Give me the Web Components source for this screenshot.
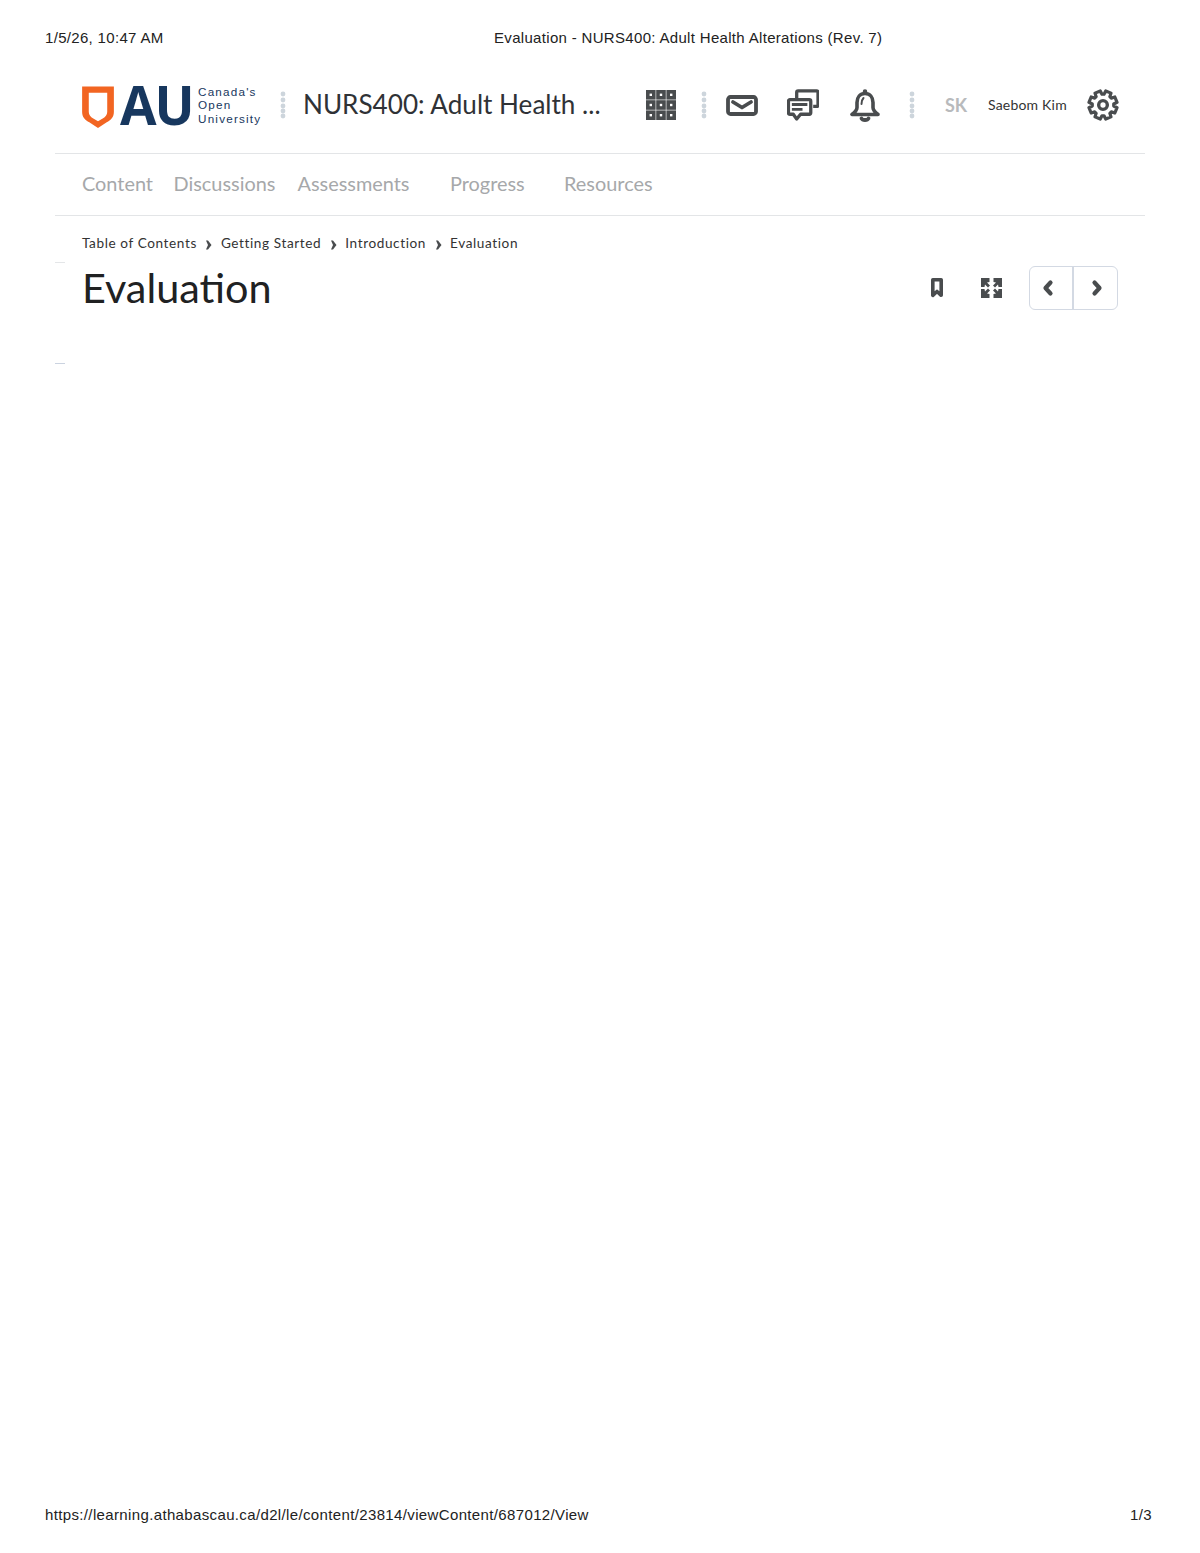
<!DOCTYPE html>
<html>
<head>
<meta charset="utf-8">
<title>Evaluation - NURS400: Adult Health Alterations (Rev. 7)</title>
<style>
    html, body { margin: 0; padding: 0; background: #fff; }
</style>
</head>
<body>
<print-page>
    <au-navbar></au-navbar>
    <au-tabs></au-tabs>
    <au-heading></au-heading>
</print-page>

<script>
// outline of a gear, 8 teeth, for the settings icon
function gearPath(cx, cy, outer, inner) {
    let d = '';
    for (let i = 0; i < 8; i++) {
        const a = i * Math.PI / 4 + Math.PI / 8;
        const corners = [[inner, -0.30], [outer, -0.20], [outer, 0.20], [inner, 0.30]];
        corners.forEach(([r, o]) => {
            const x = cx + r * Math.cos(a + o);
            const y = cy + r * Math.sin(a + o);
            d += (d ? 'L' : 'M') + x.toFixed(1) + ' ' + y.toFixed(1);
        });
    }
    return d + 'z';
}

// 3x3 waffle of the apps button
function gridCells() {
    const at = [1.8, 12, 22.2];
    return at.map(y => at.map(x => `<rect x="${x}" y="${y}" width="6" height="6"/>`).join('')).join('');
}

class PrintPage extends HTMLElement {
    constructor () {
        super();
        this.attachShadow({ mode: 'open' });
        this.shadowRoot.innerHTML = `
            <style>
                :host {
                    display: flex;
                    flex-direction: column;
                    width: 1200px;
                    height: 1553px;
                    box-sizing: border-box;
                    font-family: "Liberation Sans", Arial, sans-serif;
                    font-size: 15px;
                    letter-spacing: .36px;
                    color: #222;
                }
                .line {
                    display: grid;
                    height: 18px;
                    line-height: 18px;
                    padding: 0 48px 0 45px;
                    white-space: nowrap;
                }
                header.line { grid-template-columns: 449px auto; margin-top: 29px; letter-spacing: .32px; }
                footer.line { grid-template-columns: 1fr auto; margin-bottom: 29px; }
                main { flex: 1; padding: 14px 55px 0; letter-spacing: normal; }
            </style>
            <header class="line"><span>1/5/26, 10:47 AM</span><span>Evaluation - NURS400: Adult Health Alterations (Rev. 7)</span></header>
            <main><slot></slot></main>
            <footer class="line"><span>https://learning.athabascau.ca/d2l/le/content/23814/viewContent/687012/View</span><span>1/3</span></footer>
        `;
    }
}

class AuNavbar extends HTMLElement {
    constructor () {
        super();
        this.attachShadow({ mode: 'open' });
        const dots = `<svg class="dots" width="6" height="28" viewBox="0 0 6 28" fill="#cdd5dc"><circle cx="3" cy="3" r="2.4"/><circle cx="3" cy="9" r="2.4"/><circle cx="3" cy="15" r="2.4"/><circle cx="3" cy="20" r="2.4"/><circle cx="3" cy="25" r="2.4"/></svg>`;
        this.shadowRoot.innerHTML = `
            <style>
                :host {
                    display: flex;
                    align-items: center;
                    height: 88px;
                    padding: 0 25px 4px 27px;
                    border-bottom: 1px solid #e3e5e7;
                    font-family: Lato, sans-serif;
                }
                svg { display: block; flex: none; }
                .logo { display: flex; align-items: center; }
                .shield { margin-top: 3px; }
                .au {
                    font: 700 53px/44px "Open Sans", sans-serif;
                    color: #17375e;
                    letter-spacing: -2px;
                    margin-left: 6px;
                    width: 73px;
                }
                .tag {
                    font: 11.7px/13.5px "Liberation Sans", sans-serif;
                    letter-spacing: 1.2px;
                    color: #17375e;
                    margin-left: 5px;
                    width: 70px;
                }
                .dots { margin-left: 12px; }
                .course {
                    font-size: 26.1px;
                    color: #2f3236;
                    margin-left: 17px;
                    width: 343px;
                    white-space: nowrap;
                    padding-bottom: 2px;
                }
                .sk { font-size: 18px; font-weight: 700; color: #b8babc; margin-left: 30px; width: 22px; }
                .name { font-size: 14px; letter-spacing: .2px; color: #333; margin-left: 21px; width: 99px; white-space: nowrap; padding-bottom: 2px; }
                .slot-dots .dots { margin-left: 0; }
            </style>
            <div class="logo">
                <svg class="shield" width="32" height="42" viewBox="1 1.500 31 41"><path d="M1 2h31v25c0 5-3 8-7 10l-8.500 5.500L8 37c-4-2-7-5-7-10z" fill="#f26522"/><path d="M7.500 8h18v19c0 3-2 5-4 6l-5 3-5-3c-2-1-4-3-4-6z" fill="#fff"/></svg>
                <span class="au">AU</span>
                <span class="tag">Canada's<br>Open<br>University</span>
            </div>
            ${dots}
            <span class="course">NURS400: Adult Health ...</span>
            <svg width="30" height="30" viewBox="0 0 30 30" fill="none" stroke="#494c4e" stroke-width="3.600">${gridCells()}</svg>
            <span class="slot-dots" style="margin-left:25px">${dots}</span>
            <svg style="margin-left:19px" width="32" height="21" viewBox="0 0 32 21" fill="none" stroke="#494c4e" stroke-width="3.800" stroke-linejoin="round" stroke-linecap="round"><rect x="2" y="2" width="28" height="17" rx="2.500"/><path d="M7 7l9 5.500L25 7"/></svg>
            <svg style="margin-left:29px" width="32" height="33" viewBox="0 0 33 33" fill="none" stroke="#494c4e" stroke-width="3.400" stroke-linejoin="round"><path d="M10 9V3a1.500 1.500 0 0 1 1.500-1.500h19A1.500 1.500 0 0 1 32 3v13a1.500 1.500 0 0 1-1.500 1.500H27"/><path d="M3 10.500h20a1.500 1.500 0 0 1 1.500 1.500v12a1.500 1.500 0 0 1-1.500 1.500H14l-4 5-3.500-5H3A1.500 1.500 0 0 1 1.500 24V12A1.500 1.500 0 0 1 3 10.500z"/><path d="M5 15.500h16M5 20.500h11" stroke-width="3"/></svg>
            <svg style="margin-left:31px" width="30" height="33" viewBox="0 0 30 33" fill="none" stroke="#494c4e" stroke-width="3.600" stroke-linejoin="round" stroke-linecap="round"><path d="M15 4.500c-5 0-8 4-8 9v5c0 3-2.500 5-5 7h26c-2.500-2-5-4-5-7v-5c0-5-3-9-8-9z"/><path d="M11.500 15c0-3 .5-4.500 2-6" stroke-width="2"/><circle cx="15" cy="2.500" r="1.500" fill="#494c4e" stroke-width="1.500"/><path d="M11.500 29.500c1 2 6 2 7 0" stroke-width="3.800"/></svg>
            <span class="slot-dots" style="margin-left:29px">${dots}</span>
            <span class="sk">SK</span>
            <span class="name">Saebom Kim</span>
            <svg width="32" height="32" viewBox="0 0 34 34" fill="none" stroke="#494c4e" stroke-linejoin="round"><path stroke-width="3.400" d="${gearPath(17, 17, 15.2, 11.4)}"/><circle cx="17" cy="17" r="4.600" stroke-width="3.600"/></svg>
        `;
    }
}

class AuTabs extends HTMLElement {
    constructor () {
        super();
        this.attachShadow({ mode: 'open' });
        const tabs = [['Content', 91.5], ['Discussions', 124], ['Assessments', 152.5], ['Progress', 114], ['Resources', 100]];
        this.shadowRoot.innerHTML = `
            <style>
                :host {
                    display: flex;
                    align-items: center;
                    height: 57px;
                    padding: 0 0 4px 27px;
                    border-bottom: 1px solid #e3e5e7;
                    font: 19.9px Lato, sans-serif;
                    color: #a6a8aa;
                }
                span { display: block; white-space: nowrap; }
            </style>
            ${tabs.map(([label, w]) => `<span style="width:${w}px">${label}</span>`).join('')}
        `;
    }
}

class AuHeading extends HTMLElement {
    constructor () {
        super();
        this.attachShadow({ mode: 'open' });
        const sep = `<svg width="7" height="10" viewBox="0 0 7 10" fill="#494c4e"><path d="M1 .5h2l3.500 4.500L3 9.500H1L3 5z"/></svg>`;
        this.shadowRoot.innerHTML = `
            <style>
                :host { display: block; font-family: Lato, sans-serif; }
                svg { display: block; flex: none; }
                .crumbs {
                    display: flex;
                    align-items: center;
                    padding: 17px 0 0 27px;
                    height: 20px;
                    font-size: 13.600px;
                    letter-spacing: .6px;
                    color: #333;
                    white-space: nowrap;
                }
                .crumbs svg { margin: 4px 8.500px 0 8.500px; }
                .dash { width: 10px; height: 1px; background: #e4e6e8; }
                .dash.end { background: #cbd3e0; margin-top: 71px; }
                .crumbs + .dash { margin-top: 9px; }
                .title {
                    display: flex;
                    align-items: center;
                    height: 29px;
                    padding: 0 27px;
                }
                h1 {
                    flex: 1;
                    margin: 0;
                    font-size: 41.400px;
                    font-weight: 400;
                    line-height: 52px;
                    color: #202122;
                    position: relative;
                    top: 9px;
                }
                .tools { display: flex; align-items: center; position: relative; top: 10px; }
                .pager {
                    display: flex;
                    width: 87px;
                    height: 42px;
                    margin-left: 27px;
                    border: 1px solid #d3d9e3;
                    border-radius: 6px;
                }
                .pager div { display: flex; align-items: center; justify-content: center; box-sizing: border-box; }
                .pager .prev { width: 42px; padding-right: 6px; }
                .pager .next { flex: 1; padding-left: 3px; border-left: 2px solid #d3d9e3; }
            </style>
            <div class="crumbs">Table of Contents${sep}Getting Started${sep}Introduction${sep}Evaluation</div>
            <div class="dash"></div>
            <div class="title">
                <h1>Evaluation</h1>
                <div class="tools">
                    <svg width="12" height="20" viewBox="0 0 12 20" fill="none" stroke="#494c4e" stroke-width="3.600" stroke-linejoin="round"><path d="M1.800 1.800h8.400v15.500L6 13.500l-4.200 3.800z"/></svg>
                    <svg style="margin-left:38px" width="21" height="20" viewBox="0 0 21 20" fill="#494c4e"><path d="M0 0h8.500v4L6 4.500l3 3-2 2-3-3L3.500 9H0zM21 0h-8.500v4l2.500.5-3 3 2 2 3-3 .5 2.500H21zM0 20h8.500v-4L6 15.500l3-3-2-2-3 3-.5-2.500H0zM21 20h-8.500v-4l2.500-.5-3-3 2-2 3 3 .5-2.500H21z"/></svg>
                    <div class="pager">
                        <div class="prev"><svg width="12" height="18" viewBox="0 0 12 18" fill="none" stroke="#494c4e" stroke-width="4.200" stroke-linecap="round" stroke-linejoin="round"><path d="M8.500 3.500L3.500 9l5 5.500"/></svg></div>
                        <div class="next"><svg width="12" height="18" viewBox="0 0 12 18" fill="none" stroke="#494c4e" stroke-width="4.200" stroke-linecap="round" stroke-linejoin="round"><path d="M3.500 3.500L8.500 9l-5 5.500"/></svg></div>
                    </div>
                </div>
            </div>
            <div class="dash end"></div>
        `;
    }
}

customElements.define('print-page', PrintPage);
customElements.define('au-navbar', AuNavbar);
customElements.define('au-tabs', AuTabs);
customElements.define('au-heading', AuHeading);
</script>
</body>
</html>
